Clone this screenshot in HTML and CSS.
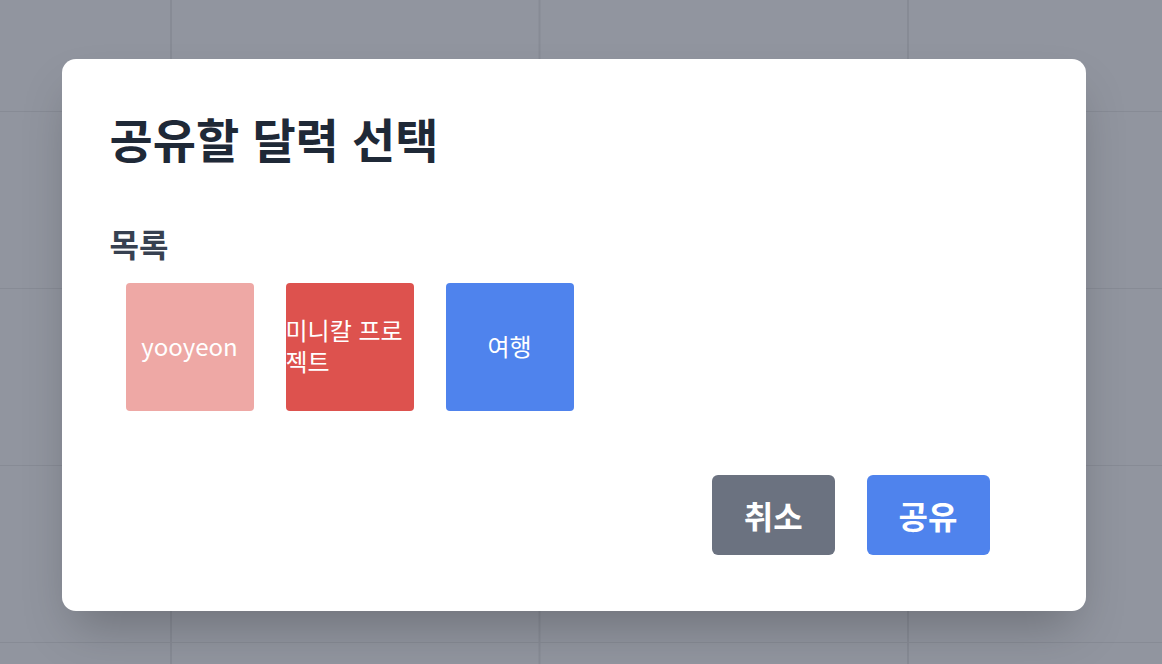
FILE: index.html
```html
<!DOCTYPE html>
<html lang="ko">
<head>
<meta charset="utf-8">
<title>공유할 달력 선택</title>
<link rel="stylesheet" href="styles.css">
</head>
<body>
<div class="overlay">
  <div class="modal">
    <h1 class="title">공유할 달력 선택</h1>
    <h2 class="label">목록</h2>
    <div class="tiles">
      <div class="tile tile-pink">yooyeon</div>
      <div class="tile tile-red">미니칼 프로젝트</div>
      <div class="tile tile-blue">여행</div>
    </div>
    <div class="footer">
      <button class="btn btn-cancel">취소</button>
      <button class="btn btn-share">공유</button>
    </div>
  </div>
</div>
</body>
</html>
```
FILE: styles.css
```css
html, body {
  margin: 0;
  padding: 0;
  height: 100%;
}
body {
  font-family: "Noto Sans CJK KR", "Noto Sans", sans-serif;
  background-color: #91959f;
  background-image:
    linear-gradient(to right, #878b95 0, #878b95 1.5px, transparent 1.5px),
    linear-gradient(to bottom, #878b95 0, #878b95 1.5px, transparent 1.5px);
  background-size: 368.5px 100%, 100% 177px;
  background-position: 170px 0, 0 111px;
  overflow: hidden;
}
.overlay {
  height: 100%;
  display: flex;
  align-items: center;
  justify-content: center;
  padding: 5px 15px 0 0;
  box-sizing: border-box;
}
.modal {
  width: 1024px;
  box-sizing: border-box;
  background: #fff;
  border-radius: 14px;
  padding: 48px 48px 56px 48px;
  box-shadow: 0 25px 50px -12px rgba(0, 0, 0, 0.25);
}
.title {
  margin: 0;
  font-size: 47px;
  font-weight: 700;
  color: #1f2937;
  line-height: 61px;
}
.label {
  margin: 55px 0 0 0;
  font-size: 32px;
  font-weight: 700;
  color: #374151;
  line-height: 40px;
}
.tiles {
  display: flex;
  gap: 32px;
  padding: 20px 16px 0 16px;
}
.tile {
  width: 128px;
  height: 128px;
  border-radius: 4px;
  display: flex;
  align-items: center;
  justify-content: center;
  color: #fff;
  font-size: 24px;
  font-weight: 400;
  line-height: 31px;
  padding-bottom: 3px;
  box-sizing: border-box;
}
.tile-pink { background: #eea8a5; }
.tile-red { background: #dd524e; }
.tile-blue { background: #4f83ed; }
.footer {
  display: flex;
  justify-content: flex-end;
  gap: 32px;
  padding: 64px 48px 0 0;
}
.btn {
  font-family: inherit;
  border: none;
  border-radius: 6px;
  color: #fff;
  font-size: 32px;
  font-weight: 700;
  line-height: 44px;
  padding: 18px 32px;
  cursor: pointer;
}
.btn-cancel { background: #6b7280; }
.btn-share { background: #4f83ed; }
```
